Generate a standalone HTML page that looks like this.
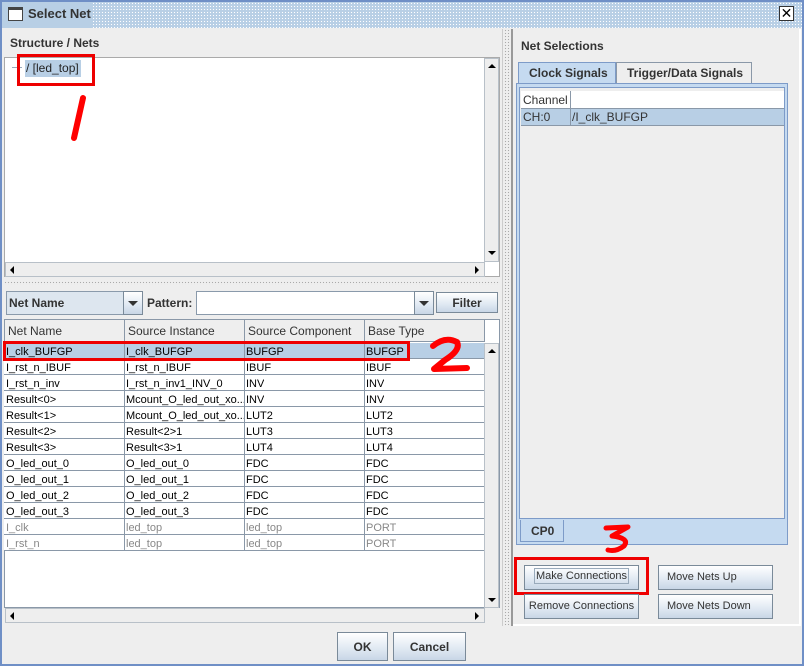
<!DOCTYPE html>
<html><head><meta charset="utf-8"><style>
*{margin:0;padding:0;box-sizing:border-box}
body{width:804px;height:666px;overflow:hidden;background:#6f8fc6;font-family:"Liberation Sans",sans-serif;font-size:11px;color:#000;position:relative}
.a{position:absolute}
.b{font-weight:bold;color:#333}
.btn{position:absolute;border:1px solid #7a8a99;background:linear-gradient(#fff,#dfe8f2 60%,#c8d6e6);text-align:center;color:#333;font-size:11px}
.sb{position:absolute;background:#eee;border:1px solid #b8c0c8}
.arr{position:absolute;width:0;height:0}
.row{position:absolute;left:4px;width:480px;height:16px;border-bottom:1px solid #8a98a8;background:#fff}
.row span{position:absolute;top:3px;padding-left:2px;white-space:nowrap;overflow:hidden;font-size:11px}
.row i{position:absolute;top:0;bottom:-1px;width:1px;background:#8a98a8}
.g span{color:#888}
</style></head><body>
<div class="a" style="left:2px;top:2px;width:800px;height:26px;background:#b8cfe5;background-image:radial-gradient(#fff 0.6px,transparent 0.8px);background-size:3px 3px"></div>
<div class="a" style="left:2px;top:2px;width:90px;height:26px;background:#b8cfe5"></div>
<div class="a" style="left:8px;top:7px;width:15px;height:14px;border:1px solid #444;background:#fff;border-top:3px solid #444"></div>
<div class="a b" style="left:28px;top:6px;font-size:13px;color:#333">Select Net</div>
<div class="a" style="left:779px;top:6px;width:15px;height:15px;border:1px solid #333;background:#fff;font-size:14px;line-height:12px;text-align:center">✕</div>
<div class="a" style="left:2px;top:28px;width:800px;height:636px;background:#eee"></div>
<div class="a" style="left:3px;top:29px;width:500px;height:597px;border-right:1px solid #ccc"></div>
<div class="a b" style="left:10px;top:36px;font-size:12px">Structure / Nets</div>
<div class="a" style="left:4px;top:57px;width:496px;height:220px;background:#fff;border:1px solid #aaa"></div>
<div class="a" style="left:12px;top:67px;width:10px;height:1px;background:#9ab"></div>
<div class="a" style="left:25px;top:60px;width:56px;height:17px;background:#b8cfe5;font-size:12px;padding:1px 0 0 1px;color:#222">/ [led_top]</div>
<div class="a" style="left:17px;top:54px;width:78px;height:32px;border:3px solid #e00"></div>
<svg class="a" style="left:68px;top:94px" width="20" height="50"><path d="M15 4 L6 44" stroke="#f00" stroke-width="6" stroke-linecap="round"/></svg>
<div class="sb" style="left:484px;top:58px;width:15px;height:204px"></div>
<div class="arr" style="left:488px;top:64px;border:4px solid transparent;border-bottom:4px solid #000;border-top:0"></div>
<div class="arr" style="left:488px;top:251px;border:4px solid transparent;border-top:4px solid #000;border-bottom:0"></div>
<div class="sb" style="left:5px;top:262px;width:480px;height:15px"></div>
<div class="arr" style="left:10px;top:266px;border:4px solid transparent;border-right:4px solid #000;border-left:0"></div>
<div class="arr" style="left:475px;top:266px;border:4px solid transparent;border-left:4px solid #000;border-right:0"></div>
<div class="a" style="left:4px;top:281px;width:496px;height:4px;background-image:radial-gradient(#aaa 0.6px,transparent 0.8px);background-size:3px 3px"></div>
<div class="a" style="left:6px;top:291px;width:118px;height:24px;border:1px solid #8a9aab;background:#dde6ef"></div>
<div class="a b" style="left:9px;top:296px;font-size:12px">Net Name</div>
<div class="btn" style="left:123px;top:291px;width:20px;height:24px"></div>
<div class="arr" style="left:128px;top:301px;border:5px solid transparent;border-top:5px solid #333;border-bottom:0"></div>
<div class="a b" style="left:147px;top:296px;font-size:12px">Pattern:</div>
<div class="a" style="left:196px;top:291px;width:220px;height:24px;border:1px solid #8a9aab;background:#fff"></div>
<div class="btn" style="left:414px;top:291px;width:20px;height:24px"></div>
<div class="arr" style="left:419px;top:301px;border:5px solid transparent;border-top:5px solid #333;border-bottom:0"></div>
<div class="btn b" style="left:436px;top:292px;width:62px;height:21px;font-size:12px;padding-top:3px">Filter</div>
<div class="a" style="left:4px;top:319px;width:496px;height:289px;background:#fff;border:1px solid #8a98a8"></div>
<div class="a" style="left:5px;top:320px;width:479px;height:22px;background:#eee;border-bottom:1px solid #8a98a8"></div>
<div class="a" style="left:8px;top:324px;font-size:12px;color:#333">Net Name</div>
<div class="a" style="left:128px;top:324px;font-size:12px;color:#333">Source Instance</div>
<div class="a" style="left:248px;top:324px;font-size:12px;color:#333">Source Component</div>
<div class="a" style="left:368px;top:324px;font-size:12px;color:#333">Base Type</div>
<div class="a" style="left:124px;top:320px;width:1px;height:22px;background:#8a98a8"></div>
<div class="a" style="left:244px;top:320px;width:1px;height:22px;background:#8a98a8"></div>
<div class="a" style="left:364px;top:320px;width:1px;height:22px;background:#8a98a8"></div>
<div class="a" style="left:484px;top:320px;width:1px;height:22px;background:#8a98a8"></div>
<div class="row" style="top:343px;background:#b8cfe5"><span style="left:0">I_clk_BUFGP</span><i style="left:120px"></i><span style="left:120px">I_clk_BUFGP</span><i style="left:240px"></i><span style="left:240px">BUFGP</span><i style="left:360px"></i><span style="left:360px">BUFGP</span></div>
<div class="row" style="top:359px"><span style="left:0">I_rst_n_IBUF</span><i style="left:120px"></i><span style="left:120px">I_rst_n_IBUF</span><i style="left:240px"></i><span style="left:240px">IBUF</span><i style="left:360px"></i><span style="left:360px">IBUF</span></div>
<div class="row" style="top:375px"><span style="left:0">I_rst_n_inv</span><i style="left:120px"></i><span style="left:120px">I_rst_n_inv1_INV_0</span><i style="left:240px"></i><span style="left:240px">INV</span><i style="left:360px"></i><span style="left:360px">INV</span></div>
<div class="row" style="top:391px"><span style="left:0">Result&lt;0&gt;</span><i style="left:120px"></i><span style="left:120px">Mcount_O_led_out_xo...</span><i style="left:240px"></i><span style="left:240px">INV</span><i style="left:360px"></i><span style="left:360px">INV</span></div>
<div class="row" style="top:407px"><span style="left:0">Result&lt;1&gt;</span><i style="left:120px"></i><span style="left:120px">Mcount_O_led_out_xo...</span><i style="left:240px"></i><span style="left:240px">LUT2</span><i style="left:360px"></i><span style="left:360px">LUT2</span></div>
<div class="row" style="top:423px"><span style="left:0">Result&lt;2&gt;</span><i style="left:120px"></i><span style="left:120px">Result&lt;2&gt;1</span><i style="left:240px"></i><span style="left:240px">LUT3</span><i style="left:360px"></i><span style="left:360px">LUT3</span></div>
<div class="row" style="top:439px"><span style="left:0">Result&lt;3&gt;</span><i style="left:120px"></i><span style="left:120px">Result&lt;3&gt;1</span><i style="left:240px"></i><span style="left:240px">LUT4</span><i style="left:360px"></i><span style="left:360px">LUT4</span></div>
<div class="row" style="top:455px"><span style="left:0">O_led_out_0</span><i style="left:120px"></i><span style="left:120px">O_led_out_0</span><i style="left:240px"></i><span style="left:240px">FDC</span><i style="left:360px"></i><span style="left:360px">FDC</span></div>
<div class="row" style="top:471px"><span style="left:0">O_led_out_1</span><i style="left:120px"></i><span style="left:120px">O_led_out_1</span><i style="left:240px"></i><span style="left:240px">FDC</span><i style="left:360px"></i><span style="left:360px">FDC</span></div>
<div class="row" style="top:487px"><span style="left:0">O_led_out_2</span><i style="left:120px"></i><span style="left:120px">O_led_out_2</span><i style="left:240px"></i><span style="left:240px">FDC</span><i style="left:360px"></i><span style="left:360px">FDC</span></div>
<div class="row" style="top:503px"><span style="left:0">O_led_out_3</span><i style="left:120px"></i><span style="left:120px">O_led_out_3</span><i style="left:240px"></i><span style="left:240px">FDC</span><i style="left:360px"></i><span style="left:360px">FDC</span></div>
<div class="row g" style="top:519px"><span style="left:0">I_clk</span><i style="left:120px"></i><span style="left:120px">led_top</span><i style="left:240px"></i><span style="left:240px">led_top</span><i style="left:360px"></i><span style="left:360px">PORT</span></div>
<div class="row g" style="top:535px"><span style="left:0">I_rst_n</span><i style="left:120px"></i><span style="left:120px">led_top</span><i style="left:240px"></i><span style="left:240px">led_top</span><i style="left:360px"></i><span style="left:360px">PORT</span></div>
<div class="a" style="left:3px;top:341px;width:407px;height:20px;border:3px solid #e00"></div>
<svg class="a" style="left:425px;top:336px" width="48" height="40"><path d="M8 10 Q20 0 32 6 Q36 14 20 24 L9 33 L42 32" stroke="#f00" stroke-width="6" fill="none" stroke-linecap="round" stroke-linejoin="round"/></svg>
<div class="sb" style="left:484px;top:343px;width:15px;height:265px"></div>
<div class="arr" style="left:488px;top:349px;border:4px solid transparent;border-bottom:4px solid #000;border-top:0"></div>
<div class="arr" style="left:488px;top:598px;border:4px solid transparent;border-top:4px solid #000;border-bottom:0"></div>
<div class="sb" style="left:5px;top:608px;width:480px;height:15px"></div>
<div class="arr" style="left:10px;top:612px;border:4px solid transparent;border-right:4px solid #000;border-left:0"></div>
<div class="arr" style="left:475px;top:612px;border:4px solid transparent;border-left:4px solid #000;border-right:0"></div>
<div class="a" style="left:504px;top:29px;width:6px;height:597px;background-image:radial-gradient(#aaa 0.6px,transparent 0.8px);background-size:3px 3px"></div>
<div class="a" style="left:511px;top:29px;width:2px;height:597px;background:#999"></div>
<div class="a" style="left:513px;top:29px;width:288px;height:597px;background:#eee;border-bottom:2px solid #fff;border-right:2px solid #fff"></div>
<div class="a b" style="left:521px;top:39px;font-size:12px">Net Selections</div>
<div class="a b" style="left:518px;top:62px;width:98px;height:23px;background:#c5daf0;border:1px solid #7d9bc8;border-bottom:0;font-size:12px;padding:3px 0 0 10px">Clock Signals</div>
<div class="a b" style="left:616px;top:62px;width:136px;height:21px;background:#eee;border:1px solid #8a98a8;border-bottom:0;font-size:12px;padding:3px 0 0 10px">Trigger/Data Signals</div>
<div class="a" style="left:516px;top:83px;width:272px;height:462px;border:1px solid #7d9bc8;background:#c5daf0"></div>
<div class="a" style="left:519px;top:87px;width:266px;height:432px;border:1px solid #7d9bc8;background:#eee"></div>
<div class="a" style="left:521px;top:91px;width:263px;height:35px;border:1px solid #8a98a8;border-top:0;border-left:0"></div>
<div class="a" style="left:521px;top:91px;width:263px;height:18px;background:#fff;border-bottom:1px solid #8a98a8"></div>
<div class="a" style="left:523px;top:93px;font-size:12px;color:#333">Channel</div>
<div class="a" style="left:570px;top:91px;width:1px;height:34px;background:#8a98a8"></div>
<div class="a" style="left:521px;top:109px;width:263px;height:16px;background:#b8cfe5"></div>
<div class="a" style="left:570px;top:109px;width:1px;height:16px;background:#8a98a8"></div>
<div class="a" style="left:523px;top:110px;font-size:12px;color:#333">CH:0</div>
<div class="a" style="left:572px;top:110px;font-size:12px;color:#333">/I_clk_BUFGP</div>
<div class="a b" style="left:520px;top:520px;width:44px;height:22px;background:#c5daf0;border:1px solid #7d9bc8;border-top:0;font-size:12px;padding:4px 0 0 10px">CP0</div>
<svg class="a" style="left:600px;top:522px" width="34" height="34"><path d="M6 6 L28 5 L12 14 Q30 16 24 24 Q16 30 8 28" stroke="#f00" stroke-width="5" fill="none" stroke-linecap="round" stroke-linejoin="round"/></svg>
<div class="btn" style="left:524px;top:565px;width:115px;height:25px;padding-top:4px"><span style="border:1px solid #9ab;padding:1px 1px">Make Connections</span></div>
<div class="a" style="left:514px;top:557px;width:135px;height:38px;border:3px solid #e00"></div>
<div class="btn" style="left:524px;top:594px;width:115px;height:25px;padding-top:5px">Remove Connections</div>
<div class="btn" style="left:658px;top:565px;width:115px;height:25px;padding:5px 0 0 8px;text-align:left">Move Nets Up</div>
<div class="btn" style="left:658px;top:594px;width:115px;height:25px;padding:5px 0 0 8px;text-align:left">Move Nets Down</div>
<div class="btn b" style="left:337px;top:632px;width:51px;height:29px;padding-top:7px;font-size:12px">OK</div>
<div class="btn b" style="left:393px;top:632px;width:73px;height:29px;padding-top:7px;font-size:12px">Cancel</div>
</body></html>
